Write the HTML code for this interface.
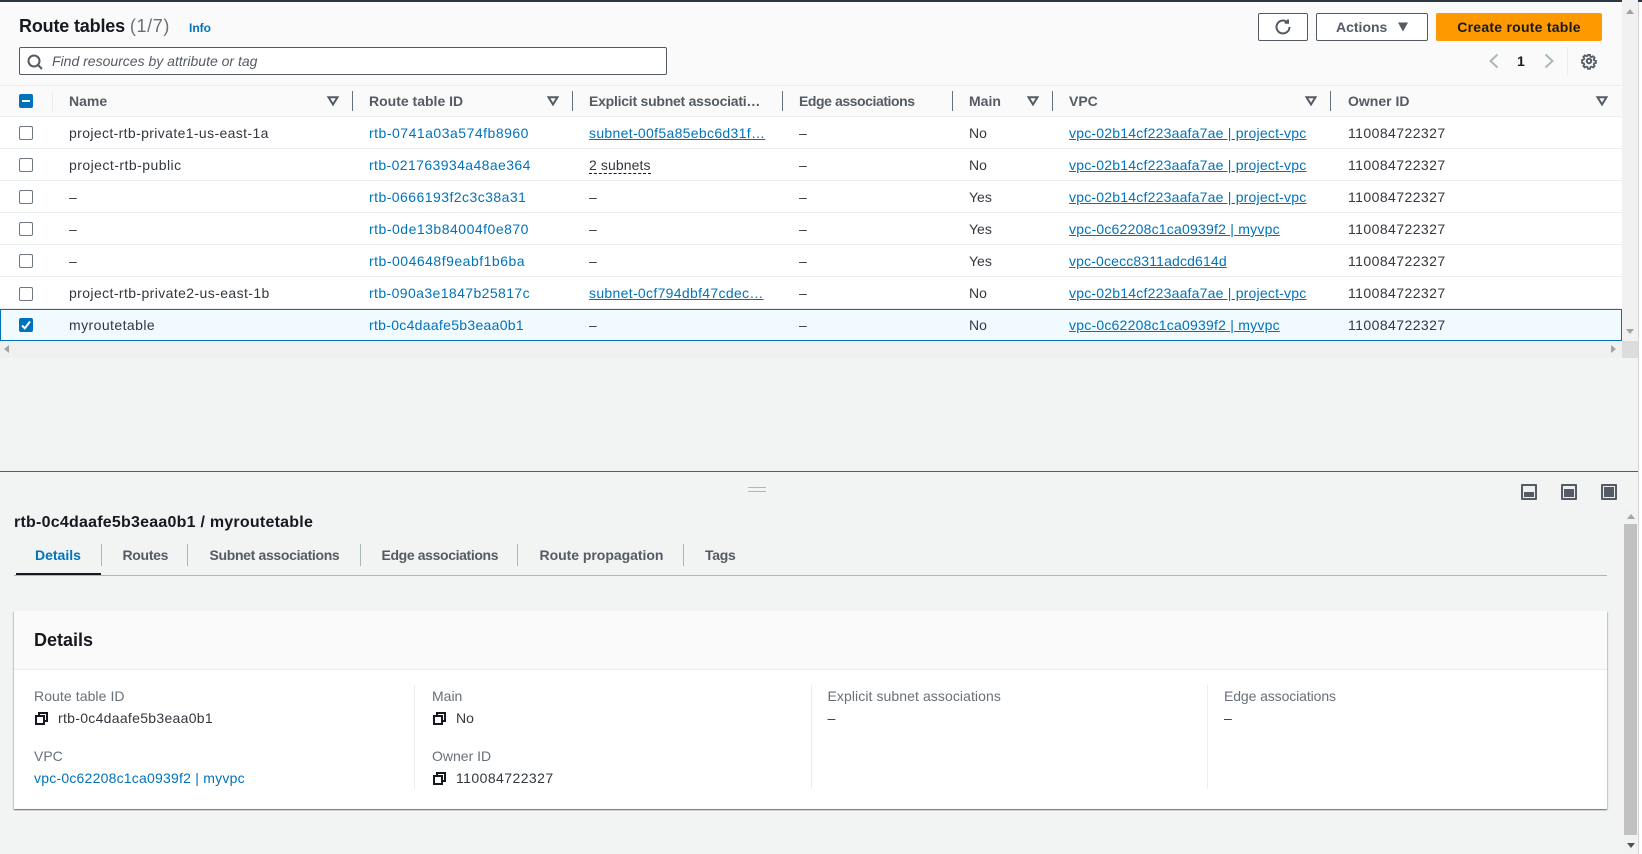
<!DOCTYPE html>
<html><head><meta charset="utf-8"><title>Route tables</title>
<style>
*{box-sizing:border-box}
html,body{margin:0;padding:0;width:1642px;height:854px;overflow:hidden;background:#fff;font-family:"Liberation Sans",sans-serif;font-size:14px;color:#33383e}
.a{position:absolute;white-space:nowrap}
a{color:#0073bb;text-decoration:none}
a.u{text-decoration:underline}
.row{position:absolute;left:0;width:1622px;height:32px;background:#fff;border-bottom:1px solid #eaeded;line-height:33px}
.row span,.row a{position:absolute;top:0;white-space:nowrap}
.c1{left:69px}.c2{left:369px}.c3{left:589px}.c4{left:799px}.c5{left:969px}.c6{left:1069px}.c7{left:1348px}
.row .c7{letter-spacing:.43px}
.row a.c6{letter-spacing:.21px}
.row a.c3{letter-spacing:.32px}
.cb{position:absolute;left:19px;top:10px;width:14px;height:14px;border:1px solid #6f7780;border-radius:2px;background:#fff}
.th{position:absolute;top:85px;line-height:32px;font-weight:bold;color:#545b64;white-space:nowrap}
.sep{position:absolute;top:91px;width:1px;height:20px;background:#687078}
.tab{position:absolute;top:544px;line-height:22px;font-weight:bold;color:#545b64;white-space:nowrap}
.tsep{position:absolute;top:544px;width:1px;height:22px;background:#aab7b8}
.lbl{position:absolute;color:#687078;white-space:nowrap;line-height:20px}
.val{position:absolute;white-space:nowrap;line-height:20px}
.csep{position:absolute;top:685px;width:1px;height:104px;background:#eaeded}
svg{position:absolute;display:block;overflow:visible}
</style></head><body>

<!-- top panel background -->
<div class="a" style="left:0;top:0;width:1622px;height:117px;background:#fafafa"></div>
<div class="a" style="left:0;top:0;width:1642px;height:2px;background:#2c3744"></div>
<div class="a" style="left:0;top:358px;width:1638px;height:113px;background:#f2f3f3"></div>
<div class="a" style="left:0;top:472px;width:1638px;height:382px;background:#f2f3f3"></div>
<div class="a" style="left:0;top:471px;width:1638px;height:1px;background:#545b64"></div>

<!-- title -->
<div class="a" style="left:19px;top:14px;line-height:24px;font-size:18px;font-weight:bold;color:#16191f;letter-spacing:-.17px">Route tables <span style="font-weight:normal;color:#687078;letter-spacing:.65px">(1/7)</span></div>
<a class="a" style="left:189px;top:20px;line-height:16px;font-size:12px;font-weight:bold">Info</a>

<!-- search -->
<div class="a" style="left:19px;top:47px;width:648px;height:28px;background:#fff;border:1px solid #545b64;border-radius:2px"></div>
<svg style="left:27px;top:54px" width="16" height="16" viewBox="0 0 16 16" fill="none" stroke="#545b64" stroke-width="2"><circle cx="7" cy="7" r="5.5"/><path d="M11 11l4 4"/></svg>
<div class="a" style="left:52px;top:52px;line-height:18px;font-style:italic;color:#545b64">Find resources by attribute or tag</div>

<!-- top buttons -->
<div class="a" style="left:1258px;top:13px;width:50px;height:28px;background:#fff;border:1px solid #545b64;border-radius:2px"></div>
<svg style="left:1275px;top:19px" width="16" height="16" viewBox="0 0 16 16" fill="none" stroke="#545b64" stroke-width="2"><path d="M14.5 8A6.5 6.5 0 1 1 12.2 3"/><path d="M13 .5V3.8H9.7"/></svg>
<div class="a" style="left:1316px;top:13px;width:112px;height:28px;background:#fff;border:1px solid #545b64;border-radius:2px"></div>
<div class="a" style="left:1336px;top:13px;line-height:28px;font-weight:bold;color:#545b64">Actions</div>
<svg style="left:1397px;top:22px" width="12" height="10" viewBox="0 0 12 10"><path d="M1 .5h10L6 9.5z" fill="#545b64"/></svg>
<div class="a" style="left:1436px;top:13px;width:166px;height:28px;background:#ff9900;border-radius:2px;text-align:center;line-height:28px;font-weight:bold;color:#16191f;letter-spacing:.25px">Create route table</div>

<!-- pagination -->
<svg style="left:1488px;top:54px" width="12" height="14" viewBox="0 0 12 14" fill="none" stroke="#aab7b8" stroke-width="2"><path d="M9.5 .5L2.5 7l7 6.5"/></svg>
<div class="a" style="left:1517px;top:52px;line-height:18px;font-weight:bold;color:#16191f">1</div>
<svg style="left:1543px;top:54px" width="12" height="14" viewBox="0 0 12 14" fill="none" stroke="#aab7b8" stroke-width="2"><path d="M2.5 .5L9.5 7l-7 6.5"/></svg>
<div class="a" style="left:1567px;top:47px;width:1px;height:28px;background:#eaeded"></div>
<svg style="left:1581px;top:53px" width="16" height="16" viewBox="0 0 16 16" fill="none" stroke="#545b64" stroke-width="2"><circle cx="8" cy="8" r="2.2"/><path d="M6.8 1h2.4l.4 2 1.4.6 1.8-1.1 1.7 1.7-1.1 1.8.6 1.4 2 .4v2.4l-2 .4-.6 1.4 1.1 1.8-1.7 1.7-1.8-1.1-1.4.6-.4 2H6.8l-.4-2-1.4-.6-1.8 1.1-1.7-1.7 1.1-1.8-.6-1.4-2-.4V6.8l2-.4.6-1.4-1.1-1.8 1.7-1.7 1.8 1.1 1.4-.6z" transform="translate(1.04 1.04) scale(.87)"/></svg>

<!-- header -->
<div class="a" style="left:0;top:85px;width:1622px;height:32px;background:#fafafa;border-top:1px solid #eaeded;border-bottom:1px solid #eaeded"></div>
<div class="a" style="left:19px;top:94px;width:14px;height:14px;background:#0073bb;border-radius:2px"></div>
<div class="a" style="left:22px;top:100px;width:8px;height:2px;background:#fff"></div>
<div class="a" style="left:52px;top:91px;width:1px;height:20px;background:#eaeded"></div>
<div class="th c1">Name</div><div class="th c2">Route table ID</div><div class="th c3" style="letter-spacing:-.24px">Explicit subnet associati…</div><div class="th c4" style="letter-spacing:-.43px">Edge associations</div><div class="th c5">Main</div><div class="th c6">VPC</div><div class="th c7">Owner ID</div>
<div class="sep" style="left:352px"></div><div class="sep" style="left:572px"></div><div class="sep" style="left:782px"></div><div class="sep" style="left:952px"></div><div class="sep" style="left:1052px"></div><div class="sep" style="left:1330px"></div>
<svg style="left:327px;top:96px" width="12" height="10" viewBox="0 0 12 10"><path d="M1.5 1.2h9L6 8.5z" fill="none" stroke="#545b64" stroke-width="2"/></svg>
<svg style="left:547px;top:96px" width="12" height="10" viewBox="0 0 12 10"><path d="M1.5 1.2h9L6 8.5z" fill="none" stroke="#545b64" stroke-width="2"/></svg>
<svg style="left:1027px;top:96px" width="12" height="10" viewBox="0 0 12 10"><path d="M1.5 1.2h9L6 8.5z" fill="none" stroke="#545b64" stroke-width="2"/></svg>
<svg style="left:1305px;top:96px" width="12" height="10" viewBox="0 0 12 10"><path d="M1.5 1.2h9L6 8.5z" fill="none" stroke="#545b64" stroke-width="2"/></svg>
<svg style="left:1596px;top:96px" width="12" height="10" viewBox="0 0 12 10"><path d="M1.5 1.2h9L6 8.5z" fill="none" stroke="#545b64" stroke-width="2"/></svg>

<!-- rows -->
<div class="row" style="top:117px"><i class="cb" style="top:9px"></i><span class="c1" style="letter-spacing:.37px">project-rtb-private1-us-east-1a</span><a class="c2" style="letter-spacing:.5px">rtb-0741a03a574fb8960</a><a class="c3 u">subnet-00f5a85ebc6d31f…</a><span class="c4">–</span><span class="c5">No</span><a class="c6 u">vpc-02b14cf223aafa7ae | project-vpc</a><span class="c7">110084722327</span></div>
<div class="row" style="top:149px"><i class="cb" style="top:9px"></i><span class="c1" style="letter-spacing:.46px">project-rtb-public</span><a class="c2" style="letter-spacing:.4px">rtb-021763934a48ae364</a><span class="c3" style="line-height:15px;top:9px;border-bottom:1px dashed #16191f;letter-spacing:.1px">2 subnets</span><span class="c4">–</span><span class="c5">No</span><a class="c6 u">vpc-02b14cf223aafa7ae | project-vpc</a><span class="c7">110084722327</span></div>
<div class="row" style="top:181px"><i class="cb" style="top:9px"></i><span class="c1">–</span><a class="c2" style="letter-spacing:.45px">rtb-0666193f2c3c38a31</a><span class="c3">–</span><span class="c4">–</span><span class="c5">Yes</span><a class="c6 u">vpc-02b14cf223aafa7ae | project-vpc</a><span class="c7">110084722327</span></div>
<div class="row" style="top:213px"><i class="cb" style="top:9px"></i><span class="c1">–</span><a class="c2" style="letter-spacing:.5px">rtb-0de13b84004f0e870</a><span class="c3">–</span><span class="c4">–</span><span class="c5">Yes</span><a class="c6 u" style="letter-spacing:.22px">vpc-0c62208c1ca0939f2 | myvpc</a><span class="c7">110084722327</span></div>
<div class="row" style="top:245px"><i class="cb" style="top:9px"></i><span class="c1">–</span><a class="c2" style="letter-spacing:.5px">rtb-004648f9eabf1b6ba</a><span class="c3">–</span><span class="c4">–</span><span class="c5">Yes</span><a class="c6 u" style="letter-spacing:.15px">vpc-0cecc8311adcd614d</a><span class="c7">110084722327</span></div>
<div class="row" style="top:277px"><i class="cb"></i><span class="c1" style="letter-spacing:.4px">project-rtb-private2-us-east-1b</span><a class="c2" style="letter-spacing:.4px">rtb-090a3e1847b25817c</a><a class="c3 u">subnet-0cf794dbf47cdec…</a><span class="c4">–</span><span class="c5">No</span><a class="c6 u">vpc-02b14cf223aafa7ae | project-vpc</a><span class="c7">110084722327</span></div>
<div class="row" style="top:309px;background:#f1faff;box-shadow:inset 0 0 0 1px #0073bb;border:0"><i class="cb" style="background:#0073bb;border:0;top:9px"></i><span class="c1" style="letter-spacing:.43px">myroutetable</span><a class="c2" style="letter-spacing:.3px">rtb-0c4daafe5b3eaa0b1</a><span class="c3">–</span><span class="c4">–</span><span class="c5">No</span><a class="c6 u" style="letter-spacing:.22px">vpc-0c62208c1ca0939f2 | myvpc</a><span class="c7">110084722327</span></div>
<svg style="left:19px;top:318px" width="14" height="14" viewBox="0 0 14 14" fill="none" stroke="#fff" stroke-width="2"><path d="M3 7.5l2.8 2.8L11 3.5"/></svg>

<!-- upper scrollbars -->
<div class="a" style="left:1622px;top:0;width:16px;height:341px;background:#f1f1f1"></div>
<div class="a" style="left:1622px;top:2px;width:16px;height:339px;background:#f1f1f1"></div>
<div class="a" style="left:0;top:341px;width:1622px;height:17px;background:#f0f0f0"></div>
<div class="a" style="left:1622px;top:341px;width:16px;height:17px;background:#dcdcdc"></div>
<svg style="left:1626px;top:9px" width="8" height="5" viewBox="0 0 8 5"><path d="M4 0l4 5H0z" fill="#a3a3a3"/></svg>
<svg style="left:1626px;top:329px" width="8" height="5" viewBox="0 0 8 5"><path d="M0 0h8L4 5z" fill="#a3a3a3"/></svg>
<svg style="left:4px;top:345px" width="5" height="8" viewBox="0 0 5 8"><path d="M5 0v8L0 4z" fill="#a3a3a3"/></svg>
<svg style="left:1611px;top:345px" width="5" height="8" viewBox="0 0 5 8"><path d="M0 0v8l5-4z" fill="#a3a3a3"/></svg>

<!-- right edge -->
<div class="a" style="left:1638px;top:2px;width:1px;height:852px;background:#d5d5d5"></div>
<div class="a" style="left:1639px;top:2px;width:3px;height:852px;background:#fff"></div>

<!-- resize handle -->
<div class="a" style="left:748px;top:487px;width:18px;height:1px;background:#aab7b8"></div>
<div class="a" style="left:748px;top:491px;width:18px;height:1px;background:#aab7b8"></div>

<!-- layout icons -->
<svg style="left:1521px;top:484px" width="16" height="16" viewBox="0 0 16 16"><rect width="16" height="16" rx="1" fill="#545b64"/><rect x="2" y="2" width="12" height="12" fill="#eef0f0"/><rect x="3" y="8" width="10" height="5" fill="#545b64"/></svg>
<svg style="left:1561px;top:484px" width="16" height="16" viewBox="0 0 16 16"><rect width="16" height="16" rx="1" fill="#545b64"/><rect x="2" y="2" width="12" height="12" fill="#eef0f0"/><rect x="3" y="5" width="10" height="8" fill="#545b64"/></svg>
<svg style="left:1601px;top:484px" width="16" height="16" viewBox="0 0 16 16"><rect width="16" height="16" rx="1" fill="#545b64"/><rect x="2" y="2" width="12" height="12" fill="#eef0f0"/><rect x="3" y="3" width="10" height="10" fill="#545b64"/></svg>

<!-- lower heading -->
<div class="a" style="left:14px;top:512px;line-height:22px;font-size:16px;font-weight:bold;color:#16191f;letter-spacing:.23px">rtb-0c4daafe5b3eaa0b1 / myroutetable</div>

<!-- tabs -->
<div class="tab" style="left:35px;color:#0073bb">Details</div>
<div class="tsep" style="left:101px"></div>
<div class="tab" style="left:122.5px;letter-spacing:-.3px">Routes</div>
<div class="tsep" style="left:187px"></div>
<div class="tab" style="left:209.5px;letter-spacing:-.33px">Subnet associations</div>
<div class="tsep" style="left:360px"></div>
<div class="tab" style="left:381.5px;letter-spacing:-.37px">Edge associations</div>
<div class="tsep" style="left:517px"></div>
<div class="tab" style="left:539.5px;letter-spacing:-.03px">Route propagation</div>
<div class="tsep" style="left:683px"></div>
<div class="tab" style="left:705px;letter-spacing:-.3px">Tags</div>
<div class="a" style="left:14px;top:575px;width:1593px;height:1px;background:#aab7b8"></div>
<div class="a" style="left:16px;top:573px;width:85px;height:2px;background:#16191f"></div>

<!-- card -->
<div class="a" style="left:14px;top:611px;width:1593px;height:198px;background:#fff;box-shadow:0 1px 1px 0 rgba(0,28,36,.45),1px 1px 1px 0 rgba(0,28,36,.15),-1px 1px 1px 0 rgba(0,28,36,.15)"></div>
<div class="a" style="left:14px;top:611px;width:1593px;height:59px;background:#fafafa;border-bottom:1px solid #eaeded"></div>
<div class="a" style="left:34px;top:628px;line-height:24px;font-size:18px;font-weight:bold;color:#16191f">Details</div>
<div class="csep" style="left:414px"></div><div class="csep" style="left:811px"></div><div class="csep" style="left:1207px"></div>

<div class="lbl" style="left:34px;top:686px;letter-spacing:.08px">Route table ID</div>
<svg style="left:35px;top:712px" width="13" height="13" viewBox="0 0 13 13" fill="none" stroke="#16191f" stroke-width="2"><rect x="1" y="4" width="8" height="8"/><path d="M4 4V1h8v8H9"/></svg>
<div class="val" style="left:58px;top:708px;letter-spacing:.3px">rtb-0c4daafe5b3eaa0b1</div>
<div class="lbl" style="left:34px;top:746px">VPC</div>
<a class="val" style="left:34px;top:768px;letter-spacing:.22px">vpc-0c62208c1ca0939f2 | myvpc</a>

<div class="lbl" style="left:432px;top:686px">Main</div>
<svg style="left:433px;top:712px" width="13" height="13" viewBox="0 0 13 13" fill="none" stroke="#16191f" stroke-width="2"><rect x="1" y="4" width="8" height="8"/><path d="M4 4V1h8v8H9"/></svg>
<div class="val" style="left:456px;top:708px">No</div>
<div class="lbl" style="left:432px;top:746px">Owner ID</div>
<svg style="left:433px;top:772px" width="13" height="13" viewBox="0 0 13 13" fill="none" stroke="#16191f" stroke-width="2"><rect x="1" y="4" width="8" height="8"/><path d="M4 4V1h8v8H9"/></svg>
<div class="val" style="left:456px;top:768px;letter-spacing:.43px">110084722327</div>

<div class="lbl" style="left:827.5px;top:686px;letter-spacing:.08px">Explicit subnet associations</div>
<div class="val" style="left:827.5px;top:708px">–</div>
<div class="lbl" style="left:1224px;top:686px;letter-spacing:-.1px">Edge associations</div>
<div class="val" style="left:1224px;top:708px">–</div>

<!-- lower scrollbar -->
<div class="a" style="left:1622px;top:507px;width:16px;height:347px;background:#f1f3f3"></div>
<div class="a" style="left:1624px;top:524px;width:13px;height:311px;background:#c1c1c1"></div>
<svg style="left:1627px;top:514px" width="8" height="5" viewBox="0 0 8 5"><path d="M4 0l4 5H0z" fill="#a3a3a3"/></svg>
<svg style="left:1627px;top:843px" width="8" height="5" viewBox="0 0 8 5"><path d="M0 0h8L4 5z" fill="#505050"/></svg>
</body></html>
